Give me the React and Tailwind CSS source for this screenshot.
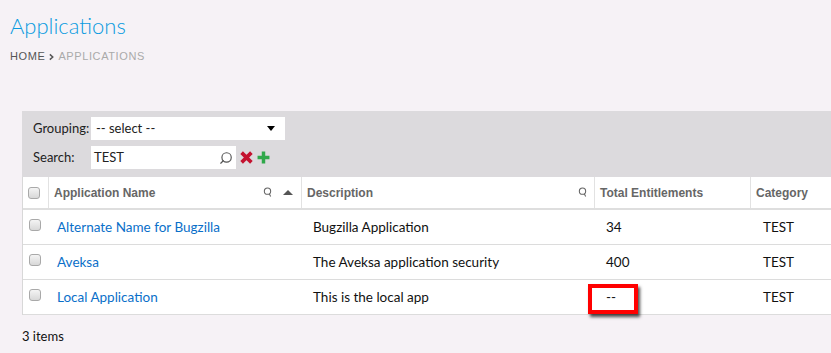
import { Search } from "lucide-react";

const rows = [
  { name: "Alternate Name for Bugzilla", desc: "Bugzilla Application", total: "34", cat: "TEST" },
  { name: "Aveksa", desc: "The Aveksa application security", total: "400", cat: "TEST" },
  { name: "Local Application", desc: "This is the local app", total: "--", cat: "TEST", flagged: true },
];

const cols = "grid grid-cols-[26px_253px_293px_156px_1fr]";

function Box() {
  return (
    <span className="block w-[12px] h-[12px] rounded-[3px] border border-[#a9a9a9] bg-gradient-to-b from-[#f4f4f4] to-[#d8d8d8]" />
  );
}

function Magnifier({ className }) {
  return (
    <svg viewBox="0 0 10 12" className={className} fill="none" stroke="#666" strokeWidth="1.2">
      <circle cx="5" cy="4.5" r="3.5" />
      <path d="M7 7.5 L8.5 10.5" />
    </svg>
  );
}

export default function App() {
  return (
    <div className="w-[831px] h-[353px] overflow-hidden bg-[#f6f2f6] font-['Lato',sans-serif]">
      {/* Page title */}
      <div className="pl-[10px] pt-[11px]">
        <h1 className="text-[22px] leading-[30px] font-light text-[#0a9be0]">Applications</h1>
        <div className="mt-[9px] flex items-center text-[11px] leading-[13px] tracking-[0.6px] font-['Liberation_Sans',sans-serif]">
          <span className="text-[#555]">HOME</span>
          <svg viewBox="0 0 6 8" className="w-[5px] h-[8px] mx-[4px]" fill="none" stroke="#555" strokeWidth="1.8">
            <path d="M1 0.8 L4.5 4 L1 7.2" />
          </svg>
          <span className="text-[#aaa]">APPLICATIONS</span>
        </div>
      </div>

      {/* Filter panel */}
      <div className="ml-[22px] mt-[48px] bg-[#dcdadd] pt-[6px] pb-[8px] pl-[11px] text-[13px] text-[#222]">
        <div className="flex items-center h-[23px]">
          <span className="w-[58px]">Grouping:</span>
          <div className="w-[194px] h-[23px] bg-white flex items-center justify-between pl-[5px] pr-[10px]">
            <span>-- select --</span>
            <span className="w-0 h-0 border-l-[4px] border-r-[4px] border-t-[5px] border-l-transparent border-r-transparent border-t-black" />
          </div>
        </div>
        <div className="flex items-center h-[23px] mt-[6px]">
          <span className="w-[58px]">Search:</span>
          <div className="w-[145px] h-[23px] bg-white flex items-center justify-between pl-[3px] pr-[3px]">
            <span>TEST</span>
            <Search className="w-[14px] h-[14px] text-[#555] -scale-x-100" strokeWidth={2} />
          </div>
          <svg viewBox="0 0 12 12" className="w-[13px] h-[13px] ml-[4px]">
            <path d="M1.5 1.5 L10.5 10.5 M10.5 1.5 L1.5 10.5" stroke="#c4122f" strokeWidth="3.4" />
          </svg>
          <svg viewBox="0 0 12 12" className="w-[13px] h-[13px] ml-[4px]">
            <path d="M6 0.5 V11.5 M0.5 6 H11.5" stroke="#30a84a" strokeWidth="3.2" />
          </svg>
        </div>
      </div>

      {/* Table */}
      <div className="ml-[22px] border-l border-[#d8d8d8] bg-white">
        <div className={`${cols} h-[33px] border-b-2 border-[#dedede] font-['Liberation_Sans',sans-serif] text-[12px] font-bold text-[#666]`}>
          <div className="flex items-center pl-[5px] border-r border-[#e2e2e2]">
            <Box />
          </div>
          <div className="flex items-center pl-[5px] pr-[8px] border-r border-[#e2e2e2]">
            <span className="flex-1">Application Name</span>
            <Magnifier className="w-[9px] h-[11px]" />
            <span className="ml-[11px] w-0 h-0 border-l-[5px] border-r-[5px] border-b-[5px] border-l-transparent border-r-transparent border-b-[#555]" />
          </div>
          <div className="flex items-center pl-[5px] pr-[7px] border-r border-[#e2e2e2]">
            <span className="flex-1">Description</span>
            <Magnifier className="w-[9px] h-[11px]" />
          </div>
          <div className="flex items-center pl-[5px] border-r border-[#e2e2e2]">Total Entitlements</div>
          <div className="flex items-center pl-[5px]">Category</div>
        </div>

        {rows.map((r) => (
          <div key={r.name} className={`${cols} h-[35px] border-b border-[#dcdcdc] text-[13.5px] text-[#111]`}>
            <div className="pl-[6px] pt-[9px]">
              <Box />
            </div>
            <div className="flex items-center pl-[8px] text-[#0a6fc9]">{r.name}</div>
            <div className="flex items-center pl-[11px]">{r.desc}</div>
            <div className="relative flex items-center pl-[11px]">
              {r.total}
              {r.flagged && (
                <span className="absolute left-[-7px] top-[4px] w-[50px] h-[30px] border-[4px] border-[#ff0000] shadow-[2px_3px_3px_rgba(0,0,0,0.7)]" />
              )}
            </div>
            <div className="flex items-center pl-[12px]">{r.cat}</div>
          </div>
        ))}
      </div>

      <div className="ml-[22px] mt-[12px] text-[13px] text-[#111]">3 items</div>
    </div>
  );
}
